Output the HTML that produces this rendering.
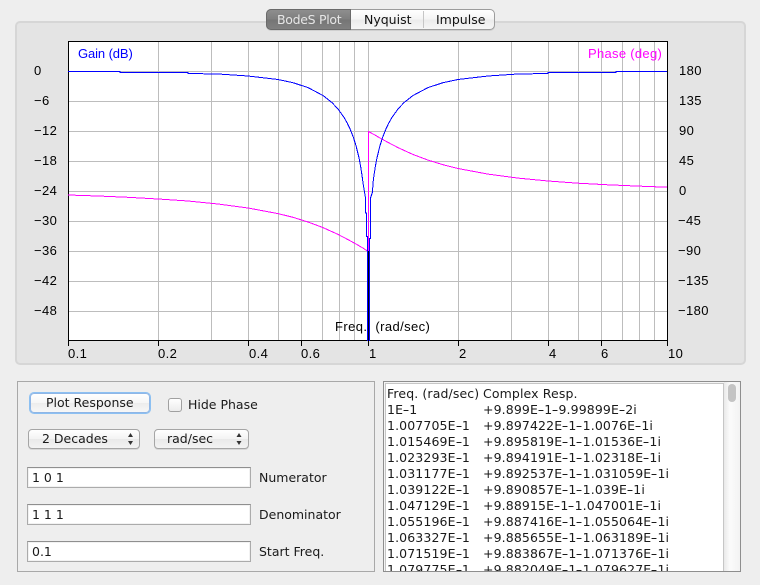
<!DOCTYPE html>
<html><head><meta charset="utf-8"><title>Bode Plot</title>
<style>
html,body{margin:0;padding:0}
body{width:760px;height:585px;background:#eeeeee;position:relative;overflow:hidden;font-family:"DejaVu Sans","Liberation Sans",sans-serif;font-size:12.5px;color:#1a1a1a}
.a{position:absolute;box-sizing:border-box}
.t{position:absolute;white-space:pre;line-height:16px;height:16px}
.l .t{letter-spacing:.12px}
.p{position:absolute;white-space:pre;line-height:14px;height:14px;font-family:"Liberation Sans",sans-serif;font-size:13px;letter-spacing:.4px;color:#000}
i{font-style:normal;display:inline-block;width:6.2px;text-align:center;transform:scaleX(1.5)}
.inp{background:#fff;border:1px solid #ababab;border-top-color:#8f8f8f;box-shadow:inset 0 0 0 1px #f2f2f2}
.sel{background:linear-gradient(#ffffff,#f3f3f3 50%,#e9e9e9 51%,#f3f3f3);border:1px solid #a5a5a5;border-radius:4px;box-shadow:0 1px 0 #d8d8d8}
</style></head><body>

<div class="a" style="left:15px;top:21px;width:731px;height:344px;background:#e4e4e4;border:2px solid #d6d6d6;border-radius:5px"></div>

<div class="a" style="left:266px;top:9px;width:229px;height:21px;border:1px solid #9c9c9c;border-radius:5px;background:linear-gradient(#ffffff,#f4f4f4 50%,#ebebeb 51%,#f6f6f6);box-shadow:0 1px 0 #cfcfcf"></div>
<div class="a" style="left:266px;top:9px;width:85px;height:21px;border:1px solid #6a6a6a;border-radius:5px 0 0 5px;background:linear-gradient(#8e8e8e,#7e7e7e 50%,#757575 51%,#808080)"></div>
<div class="a" style="left:423px;top:11px;width:1px;height:17px;background:#c6c6c6"></div>
<div class="t" style="left:277px;top:12px;color:#e6e6e6;letter-spacing:-.3px">BodeS Plot</div>
<div class="t" style="left:364px;top:12px;color:#111">Nyquist</div>
<div class="t" style="left:436px;top:12px;color:#111">Impulse</div>

<svg class="a" style="left:0;top:0" width="760" height="585" viewBox="0 0 760 585">
<rect x="68" y="41" width="600" height="300" fill="#fff"/>
<g stroke="#bdbdbd" stroke-width="1" fill="none" shape-rendering="crispEdges">
<path d="M158.5 41V340M211.5 41V340M248.5 41V340M278.5 41V340M301.5 41V340M322.5 41V340M339.5 41V340M354.5 41V340M368.5 41V340M458.5 41V340M511.5 41V340M548.5 41V340M578.5 41V340M601.5 41V340M622.5 41V340M639.5 41V340M654.5 41V340"/>
<path d="M68 71.5H667M68 101.5H667M68 131.5H667M68 161.5H667M68 191.5H667M68 221.5H667M68 251.5H667M68 281.5H667M68 311.5H667"/>
</g>
<g stroke="#000" stroke-width="1" fill="none" shape-rendering="crispEdges">
<path d="M68.5 41.5H667.5V340.5H68.5Z"/>
<path d="M68.5 340V346M158.5 340V346M248.5 340V346M301.5 340V346M458.5 340V346M548.5 340V346M601.5 340V346M667.5 340V346"/>
</g>
<rect x="368" y="238" width="1" height="108" fill="#000" shape-rendering="crispEdges"/>
<g fill="none" stroke="#ff00ff" stroke-width="1" shape-rendering="crispEdges">
<polyline points="68,195 98,196 128,197.3 158,199 188,201 218,204 248,208 278,213.6 293,217.3 308,222 323,227.6 338,234.4 344,237.5 350,240.7 356,244 362,247.5 367.5,251"/>
<polyline points="368.5,251 368.5,131.5 374,134.5 380,138 386,141.3 392,144.5 398,147.6 413,154.5 428,160.1 443,164.7 458,168.5 488,174.1 518,178.1 548,181 578,183.2 608,184.8 638,186.1 667,187.2"/>
</g>
<g fill="none" stroke="#0000ff" stroke-width="1" shape-rendering="crispEdges">
<polyline points="68,71.5 120,71.5 120,72.5 188,72.5 188,73.5 218,74 248,76 278,79.5 293,82.7 308,87.6 323,95.5 332,102.6 338,109 344,117.4 347,122.6 350,128.8 353,136.3 356,145.6 359,157.8 360.5,165.6 362,175.3 363,183 364.5,192 365.5,198 365.5,213 366.5,213 366.5,237"/>
<polyline points="370.5,238 370.5,198 372.5,192 373,183 374,175.3 375.5,165.6 377,157.8 380,145.6 383,136.3 386,128.8 389,122.6 392,117.4 398,109 404,102.6 413,95.5 428,87.6 443,82.7 458,79.5 488,76 518,74 548,73.5 548,72.5 616,72.5 616,71.5 667,71.5"/>
</g>
<g fill="#0000ff" shape-rendering="crispEdges">
<rect x="366" y="236" width="2" height="1"/>
<rect x="367" y="236" width="1" height="105"/>
<rect x="369" y="238" width="1" height="103"/>
<rect x="369" y="238" width="2" height="1"/>
</g>
</svg>

<div class="p" style="left:78px;top:47px;color:#0000ff;letter-spacing:-.1px">Gain (dB)</div>
<div class="p" style="left:588px;top:47px;color:#ff00ff;letter-spacing:.3px">Phase (deg)</div>
<div class="p" style="left:34px;top:64px">0</div>
<div class="p" style="left:34px;top:94px">−6</div>
<div class="p" style="left:34px;top:124px">−12</div>
<div class="p" style="left:34px;top:154px">−18</div>
<div class="p" style="left:34px;top:184px">−24</div>
<div class="p" style="left:34px;top:214px">−30</div>
<div class="p" style="left:34px;top:244px">−36</div>
<div class="p" style="left:34px;top:274px">−42</div>
<div class="p" style="left:34px;top:304px">−48</div>
<div class="p" style="left:679px;top:64px">180</div>
<div class="p" style="left:679px;top:94px">135</div>
<div class="p" style="left:679px;top:124px">90</div>
<div class="p" style="left:679px;top:154px">45</div>
<div class="p" style="left:679px;top:184px">0</div>
<div class="p" style="left:678px;top:214px">−45</div>
<div class="p" style="left:678px;top:244px">−90</div>
<div class="p" style="left:678px;top:274px">−135</div>
<div class="p" style="left:678px;top:304px">−180</div>
<div class="p" style="left:335px;top:320px">Freq.  (rad/sec)</div>
<div class="p" style="left:68px;top:347px">0.1</div>
<div class="p" style="left:158px;top:347px">0.2</div>
<div class="p" style="left:249px;top:347px">0.4</div>
<div class="p" style="left:301px;top:347px">0.6</div>
<div class="p" style="left:369px;top:347px">1</div>
<div class="p" style="left:459px;top:347px">2</div>
<div class="p" style="left:549px;top:347px">4</div>
<div class="p" style="left:601px;top:347px">6</div>
<div class="p" style="left:668px;top:347px">10</div>

<div class="a" style="left:17px;top:381px;width:358px;height:191px;border:1px solid #a8a8a8;background:#eeeeee"></div>
<div class="a" style="left:30px;top:393px;width:120px;height:20px;border:1px solid #8fb6e6;border-radius:4px;background:linear-gradient(#ffffff,#f6f6f6 50%,#ececec 51%,#f7f7f7);box-shadow:0 0 0 1px #8cc0f2"></div>
<div class="t" style="left:46px;top:395px">Plot Response</div>
<div class="a" style="left:168px;top:398px;width:14px;height:14px;border:1px solid #a0a0a0;border-radius:3px;background:linear-gradient(#ffffff,#ececec)"></div>
<div class="t" style="left:188px;top:397px">Hide Phase</div>
<div class="a sel" style="left:28px;top:429px;width:112px;height:20px"></div>
<div class="t" style="left:42px;top:431px">2 Decades</div>
<div class="a sel" style="left:154px;top:429px;width:95px;height:20px"></div>
<div class="t" style="left:167px;top:431px">rad/sec</div>
<svg class="a" style="left:0;top:428px" width="260" height="24"><path d="M128 9L130.5 5L133 9ZM128 13L130.5 17L133 13ZM236.5 9L239 5L241.500 9ZM236.5 13L239 17L241.500 13Z" fill="#333"/></svg>
<div class="a inp" style="left:27px;top:467px;width:224px;height:21px"></div>
<div class="t" style="left:32px;top:470px">1 0 1</div>
<div class="t" style="left:259px;top:470px">Numerator</div>
<div class="a inp" style="left:27px;top:504px;width:224px;height:21px"></div>
<div class="t" style="left:32px;top:507px">1 1 1</div>
<div class="t" style="left:259px;top:507px">Denominator</div>
<div class="a inp" style="left:27px;top:541px;width:224px;height:21px"></div>
<div class="t" style="left:32px;top:544px">0.1</div>
<div class="t" style="left:259px;top:544px">Start Freq.</div>

<div class="a l" style="left:383px;top:381px;width:358px;height:191px;border:1px solid #8e8e8e;background:#f4f4f4;overflow:hidden">
<div class="a" style="left:1px;top:1px;width:339px;height:200px;background:#fff;border:1px solid #c6c6c6"></div>
<div class="a" style="left:340px;top:0;width:17px;height:189px;background:linear-gradient(90deg,#e9e9e9,#fbfbfb 35%,#f2f2f2)"></div>
<div class="a" style="left:344px;top:2px;width:8px;height:18px;border-radius:4px;background:#c4c4c4"></div>
<div class="t" style="left:3px;top:4px">Freq. (rad/sec)</div><div class="t" style="left:99px;top:4px">Complex Resp.</div>
<div class="t" style="left:3px;top:20px">1E<i>-</i>1</div><div class="t" style="left:99px;top:20px">+9.899E<i>-</i>1<i>-</i>9.99899E<i>-</i>2i</div>
<div class="t" style="left:3px;top:36px">1.007705E<i>-</i>1</div><div class="t" style="left:99px;top:36px">+9.897422E<i>-</i>1<i>-</i>1.0076E<i>-</i>1i</div>
<div class="t" style="left:3px;top:52px">1.015469E<i>-</i>1</div><div class="t" style="left:99px;top:52px">+9.895819E<i>-</i>1<i>-</i>1.01536E<i>-</i>1i</div>
<div class="t" style="left:3px;top:68px">1.023293E<i>-</i>1</div><div class="t" style="left:99px;top:68px">+9.894191E<i>-</i>1<i>-</i>1.02318E<i>-</i>1i</div>
<div class="t" style="left:3px;top:84px">1.031177E<i>-</i>1</div><div class="t" style="left:99px;top:84px">+9.892537E<i>-</i>1<i>-</i>1.031059E<i>-</i>1i</div>
<div class="t" style="left:3px;top:100px">1.039122E<i>-</i>1</div><div class="t" style="left:99px;top:100px">+9.890857E<i>-</i>1<i>-</i>1.039E<i>-</i>1i</div>
<div class="t" style="left:3px;top:116px">1.047129E<i>-</i>1</div><div class="t" style="left:99px;top:116px">+9.88915E<i>-</i>1<i>-</i>1.047001E<i>-</i>1i</div>
<div class="t" style="left:3px;top:132px">1.055196E<i>-</i>1</div><div class="t" style="left:99px;top:132px">+9.887416E<i>-</i>1<i>-</i>1.055064E<i>-</i>1i</div>
<div class="t" style="left:3px;top:148px">1.063327E<i>-</i>1</div><div class="t" style="left:99px;top:148px">+9.885655E<i>-</i>1<i>-</i>1.063189E<i>-</i>1i</div>
<div class="t" style="left:3px;top:164px">1.071519E<i>-</i>1</div><div class="t" style="left:99px;top:164px">+9.883867E<i>-</i>1<i>-</i>1.071376E<i>-</i>1i</div>
<div class="t" style="left:3px;top:180px">1.079775E<i>-</i>1</div><div class="t" style="left:99px;top:180px">+9.882049E<i>-</i>1<i>-</i>1.079627E<i>-</i>1i</div>
</div>

</body></html>
